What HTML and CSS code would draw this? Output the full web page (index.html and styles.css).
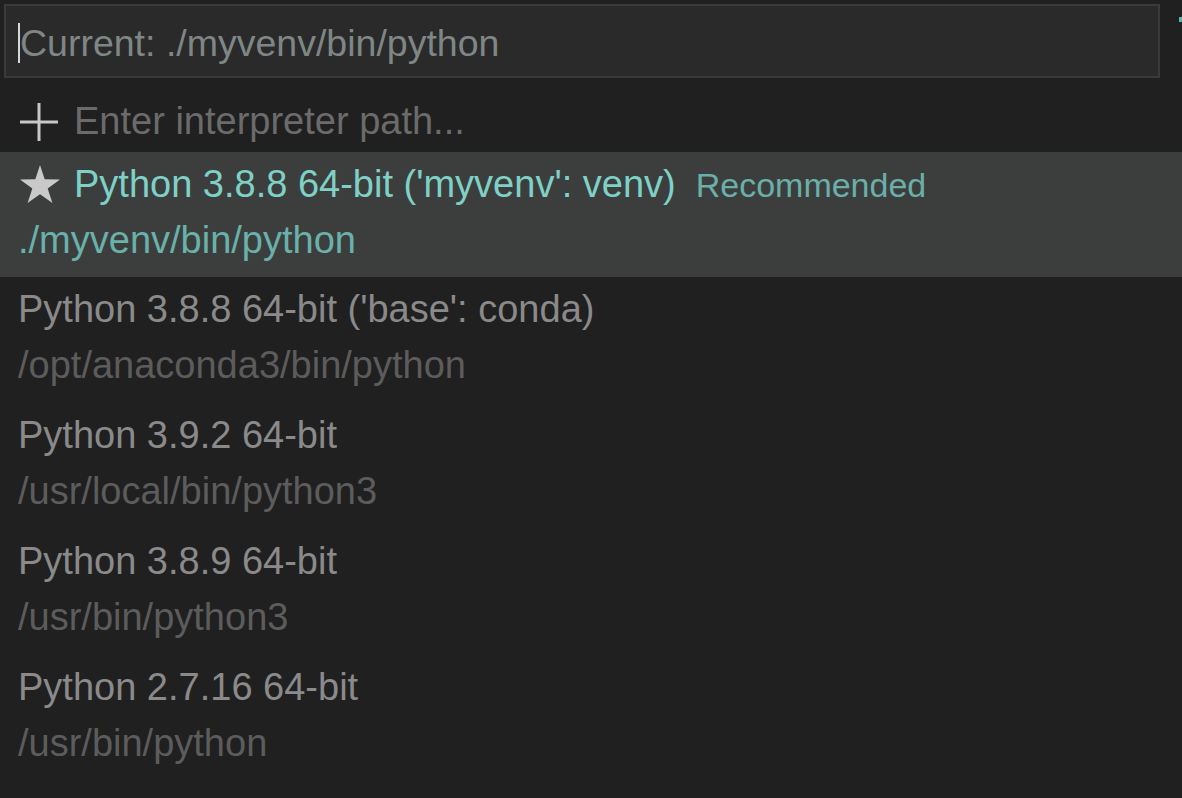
FILE: index.html
```html
<!DOCTYPE html>
<html>
<head>
<meta charset="utf-8">
<link rel="stylesheet" href="styles.css">
</head>
<body>
<div class="picker">
  <div class="input-row">
    <div class="input"><span class="caret"></span><span class="input-text">Current: ./myvenv/bin/python</span></div>
    <div class="edge-mark"></div>
  </div>
  <div class="list">
    <div class="item single">
      <svg class="icon" width="38" height="38" viewBox="0 0 38 38"><path d="M19 0v38M0 19h38" stroke="#c8c8c8" stroke-width="3" fill="none"/></svg>
      <span class="placeholder">Enter interpreter path...</span>
    </div>
    <div class="item selected">
      <div class="line title">
        <svg class="icon star" width="40" height="38" viewBox="0 0 40 38"><path d="M20 0 L24.7 14.3 L40 14.5 L27.7 23.4 L32.4 38 L20 29.2 L7.6 38 L12.3 23.4 L0 14.5 L15.3 14.3 Z" fill="#c9c9c9"/></svg>
        <span>Python 3.8.8 64-bit ('myvenv': venv)</span><span class="rec">Recommended</span>
      </div>
      <div class="line path">./myvenv/bin/python</div>
    </div>
    <div class="item">
      <div class="line title">Python 3.8.8 64-bit ('base': conda)</div>
      <div class="line path">/opt/anaconda3/bin/python</div>
    </div>
    <div class="item">
      <div class="line title">Python 3.9.2 64-bit</div>
      <div class="line path">/usr/local/bin/python3</div>
    </div>
    <div class="item">
      <div class="line title">Python 3.8.9 64-bit</div>
      <div class="line path">/usr/bin/python3</div>
    </div>
    <div class="item">
      <div class="line title">Python 2.7.16 64-bit</div>
      <div class="line path">/usr/bin/python</div>
    </div>
  </div>
</div>
</body>
</html>
```
FILE: styles.css
```css
html, body {
  margin: 0;
  padding: 0;
  background: #202020;
  width: 1182px;
  height: 798px;
  overflow: hidden;
}
body {
  font-family: "Liberation Sans", Arial, sans-serif;
  font-size: 38px;
}
.picker {
  display: flex;
  flex-direction: column;
}
.input-row {
  display: flex;
  align-items: flex-start;
  padding: 4px 0 0 4px;
}
.input {
  width: 1156px;
  height: 74px;
  background: #2a2a2a;
  border: 2px solid #3a3a3a;
  display: flex;
  align-items: center;
  padding-left: 12px;
  padding-top: 4px;
  box-sizing: border-box;
  gap: 0;
}
.caret {
  width: 2px;
  height: 40px;
  background: #d8d8d8;
}
.input-text {
  color: #7f8786;
  font-size: 37.5px;
}
.edge-mark {
  margin-left: auto;
  margin-top: 13px;
  width: 3px;
  height: 5px;
  background: #5fb3a8;
}
.list {
  margin-top: 11px;
  display: flex;
  flex-direction: column;
}
.item {
  height: 126px;
  padding: 4px 0 0 18px;
  box-sizing: border-box;
}
.item.single {
  height: 63px;
  padding-top: 2px;
  display: flex;
  align-items: center;
  gap: 16px;
}
.item.single .icon {
  margin-left: 2px;
}
.item.selected {
  height: 125px;
  background: #3c3e3e;
}
.line {
  height: 56px;
  line-height: 56px;
  white-space: nowrap;
  display: flex;
  align-items: center;
}
.title {
  color: #8a8a8a;
}
.path {
  color: #5c5c5c;
}
.selected .title {
  color: #7fd1c7;
}
.selected .path {
  color: #6ab1aa;
}
.star {
  margin-left: 2px;
  margin-right: 14px;
}
.rec {
  color: #6aafa8;
  font-size: 34px;
  margin-left: 20px;
  padding-top: 1px;
}
.placeholder {
  color: #6b6b6b;
}
```
